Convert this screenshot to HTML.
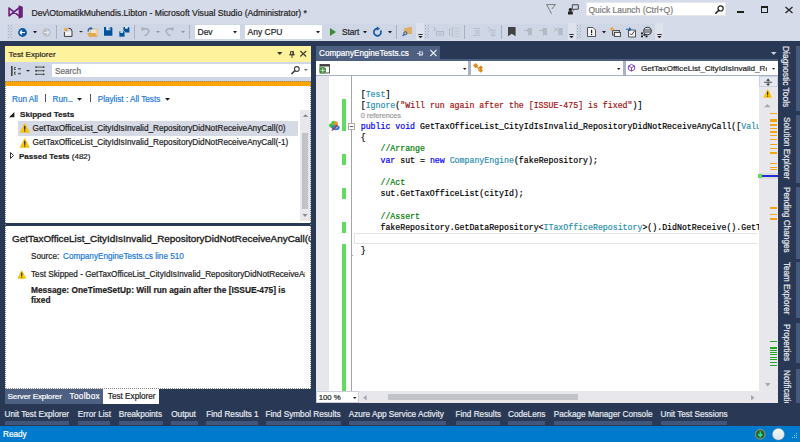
<!DOCTYPE html>
<html><head><meta charset="utf-8">
<style>
*{margin:0;padding:0;box-sizing:border-box}
html,body{width:800px;height:442px;overflow:hidden;background:#293955;font-family:"Liberation Sans",sans-serif;font-size:8.3px;color:#1e1e1e}
.a{position:absolute}
.t{position:absolute;white-space:pre;line-height:1;-webkit-text-stroke:0.2px currentColor}
svg{position:absolute;overflow:visible}
.mono{font-family:"Liberation Mono",monospace;font-size:8.24px}
</style></head><body>
<!-- ===== title bar + toolbar ===== -->
<div class="a" style="left:0;top:0;width:800px;height:41.3px;background:#D6DBE9"></div>
<svg style="left:8px;top:5px" width="15" height="14" viewBox="0 0 15 14">
  <path d="M10.6 0.3 L14.8 1.8 L14.8 12.2 L10.6 13.8 Z" fill="#68217A"/>
  <path d="M1.1 3.1 L1.1 10.8 M1.1 3.1 L11 10.9 M1.1 10.8 L11 3" stroke="#68217A" stroke-width="1.65" fill="none" stroke-linejoin="round" stroke-linecap="round"/>
</svg>
<div class="t" style="left:31.5px;top:8.5px;font-size:8.63px;color:#1e1e1e">Dev\OtomatikMuhendis.Libton - Microsoft Visual Studio (Administrator) *</div>

<!-- filter icon -->
<svg style="left:545.5px;top:4px" width="10" height="10" viewBox="0 0 10 10" fill="none" stroke="#707070" stroke-width="0.9">
  <path d="M0.5 0.6 H9.5 M0.6 0.6 L5.6 9.8 M9.4 0.6 L5.8 5"/>
</svg>
<!-- feedback icon -->
<svg style="left:567.5px;top:3.5px" width="11" height="11" viewBox="0 0 11 11">
  <path d="M4.3 0.8 H10.3 V5.2 H6.8 L5.6 6.3 V5.2 H4.3 Z" fill="none" stroke="#333" stroke-width="0.9"/>
  <circle cx="2.4" cy="5.6" r="1.7" fill="#222"/>
  <path d="M0 10.6 V8 Q0 7.2 1 7.2 H3.8 Q4.8 7.2 4.8 8 V10.6Z" fill="#222"/>
</svg>
<!-- quick launch -->
<div class="a" style="left:585.8px;top:1.9px;width:140.4px;height:14.3px;background:#fff;border:1px solid #E6E8EE"></div>
<div class="t" style="left:588.5px;top:5.5px;font-size:8.47px;color:#7A7A7A">Quick Launch (Ctrl+Q)</div>
<svg style="left:714.8px;top:4.5px" width="9" height="9" viewBox="0 0 9 9"><circle cx="5.6" cy="3.4" r="2.6" fill="none" stroke="#1e1e1e" stroke-width="1.2"/><path d="M3.8 5.2 L0.8 8.2" stroke="#1e1e1e" stroke-width="1.6" stroke-linecap="round"/></svg>
<!-- window controls -->
<div class="a" style="left:737px;top:10.6px;width:7px;height:2px;background:#1e1e1e"></div>
<div class="a" style="left:761px;top:6px;width:7px;height:7px;border:1px solid #1e1e1e;border-top-width:2px"></div>
<svg style="left:784.5px;top:7px" width="8" height="6" viewBox="0 0 8 6"><path d="M0.5 0 L7.5 6 M7.5 0 L0.5 6" stroke="#1e1e1e" stroke-width="1.2"/></svg>

<!-- toolbar bands -->
<div class="a" style="left:7px;top:23.5px;width:409px;height:16.2px;background:#CFD6E5"></div>
<div class="a" style="left:416px;top:22.5px;width:8px;height:17px;background:#DDE2EC"></div>
<div class="a" style="left:424px;top:23.5px;width:143.5px;height:16px;background:#CFD6E5"></div>
<div class="a" style="left:567.5px;top:22.5px;width:8px;height:17px;background:#DDE2EC"></div>
<div class="a" style="left:575.5px;top:23.5px;width:80px;height:16px;background:#CFD6E5"></div>
<div class="a" style="left:655px;top:22.5px;width:8px;height:17px;background:#DDE2EC"></div>
<!-- toolbar icons -->
<svg style="left:8px;top:25px" width="5" height="14" viewBox="0 0 5 14" fill="#A9B0C0"><rect x="0" y="0.0" width="1" height="1"/><rect x="3" y="0.0" width="1" height="1"/><rect x="1.5" y="1.5" width="1" height="1"/><rect x="0" y="3.0" width="1" height="1"/><rect x="3" y="3.0" width="1" height="1"/><rect x="1.5" y="4.5" width="1" height="1"/><rect x="0" y="6.0" width="1" height="1"/><rect x="3" y="6.0" width="1" height="1"/><rect x="1.5" y="7.5" width="1" height="1"/><rect x="0" y="9.0" width="1" height="1"/><rect x="3" y="9.0" width="1" height="1"/><rect x="1.5" y="10.5" width="1" height="1"/><rect x="0" y="12.0" width="1" height="1"/><rect x="3" y="12.0" width="1" height="1"/></svg>
<svg style="left:18px;top:27.6px" width="9" height="9" viewBox="0 0 9 9">
  <circle cx="4.5" cy="4.5" r="4.4" fill="#10599E"/>
  <path d="M2 4.5 H7 M2 4.5 L4 2.5 M2 4.5 L4 6.5" stroke="#fff" stroke-width="1.2" fill="none"/>
</svg>
<svg style="left:33px;top:31px" width="4" height="2.5" viewBox="0 0 4 2.5"><path d="M0 0 H4 L2 2.5Z" fill="#1e1e1e"/></svg>
<svg style="left:42px;top:27.6px" width="9" height="9" viewBox="0 0 9 9">
  <circle cx="4.5" cy="4.5" r="4.2" fill="#BDBFC4"/>
  <path d="M7 4.5 H2 M7 4.5 L5 2.5 M7 4.5 L5 6.5" stroke="#E8E9EC" stroke-width="1.2" fill="none"/>
</svg>
<div class="a" style="left:56px;top:25px;width:1.3px;height:13.5px;background:#A9B1C1"></div>
<!-- new project -->
<svg style="left:63px;top:27px" width="10" height="10" viewBox="0 0 10 10">
  <path d="M1.4 5 V9.4 H9 V4.2" fill="#F2F2F4" stroke="#333" stroke-width="0.95"/>
  <path d="M5.5 1.2 Q8.8 1 9 4.2" fill="none" stroke="#333" stroke-width="1"/>
  <path d="M3 0.2 L3.7 1.6 L5.3 1.4 L4.3 2.6 L5.3 3.8 L3.7 3.6 L3 5 L2.3 3.6 L0.7 3.8 L1.7 2.6 L0.7 1.4 L2.3 1.6Z" fill="#E0A040"/>
  <circle cx="3" cy="2.6" r="1.3" fill="#E8A444"/>
</svg>
<svg style="left:78.5px;top:31px" width="4" height="1.6" viewBox="0 0 4 1.6"><path d="M0 0 H4 L2 1.6Z" fill="#1E2A40"/></svg>
<!-- open folder -->
<svg style="left:87.3px;top:27px" width="10.5" height="10" viewBox="0 0 10.5 10">
  <path d="M3.5 2.2 H10.2 V9.6 H3.5Z" fill="#EFE6D6" stroke="#E3B868" stroke-width="0.8"/>
  <path d="M0.2 6 H8.6 L10.2 9.8 H1.6Z" fill="#E2AA50"/>
  <path d="M1.2 4.5 Q0.8 1.3 4 1.3" fill="none" stroke="#1B5EAB" stroke-width="1.4"/>
  <path d="M3.6 0 L6 1.4 L3.6 2.8Z" fill="#1B5EAB"/>
</svg>
<!-- save -->
<svg style="left:103.9px;top:27.25px" width="8.4" height="8.8" viewBox="0 0 8.4 8.8">
  <path d="M0 0 H7.4 L8.4 1 V8.8 H0Z" fill="#00539C"/>
  <rect x="2.3" y="0" width="4" height="3.2" fill="#F0F2F7"/>
  <rect x="4.6" y="0.5" width="1" height="2" fill="#00539C"/>
</svg>
<!-- save all -->
<svg style="left:118.7px;top:26.7px" width="10.5" height="10.2" viewBox="0 0 10.5 10.2">
  <path d="M4.4 0 H9.6 L10.4 0.8 V5.4 H4.4Z" fill="#00539C"/>
  <rect x="6" y="0" width="2.8" height="1.6" fill="#F0F2F7"/>
  <path d="M0 4 H5 L5.9 4.9 V10 H0Z" fill="#00539C" stroke="#CFD6E5" stroke-width="0.7"/>
  <rect x="1.4" y="4.3" width="2.6" height="1.6" fill="#F0F2F7"/>
</svg>
<div class="a" style="left:133.5px;top:25px;width:1.3px;height:13.5px;background:#A9B1C1"></div>
<!-- undo / redo (disabled) -->
<svg style="left:140.5px;top:27px" width="9" height="9.2" viewBox="0 0 9 9.2">
  <path d="M0 0.3 L4 0.9 L1 4.2Z" fill="#A9AEB9"/>
  <path d="M1.8 2.6 Q5.5 0.6 7.5 3 Q9 5.5 3.6 9" stroke="#A9AEB9" stroke-width="1.6" fill="none"/>
</svg>
<svg style="left:156px;top:31px" width="4" height="2" viewBox="0 0 4 2"><path d="M0 0 H4 L2 2Z" fill="#8E949F"/></svg>
<svg style="left:165px;top:27px" width="9" height="9.2" viewBox="0 0 9 9.2">
  <path d="M9 0.3 L5 0.9 L8 4.2Z" fill="#A9AEB9"/>
  <path d="M7.2 2.6 Q3.5 0.6 1.5 3 Q0 5.5 5.4 9" stroke="#A9AEB9" stroke-width="1.6" fill="none"/>
</svg>
<svg style="left:180.6px;top:31px" width="4" height="2" viewBox="0 0 4 2"><path d="M0 0 H4 L2 2Z" fill="#8E949F"/></svg>
<div class="a" style="left:189px;top:25px;width:1.3px;height:13.5px;background:#A9B1C1"></div>
<!-- combos -->
<div class="a" style="left:194.7px;top:25px;width:45px;height:14px;background:#fff"></div>
<div class="t" style="left:197.5px;top:27.5px;font-size:8.5px;color:#1e1e1e">Dev</div>
<svg style="left:233px;top:31px" width="4" height="2.5" viewBox="0 0 4 2.5"><path d="M0 0 H4 L2 2.5Z" fill="#1e1e1e"/></svg>
<div class="a" style="left:244.7px;top:25px;width:77px;height:14px;background:#fff"></div>
<div class="t" style="left:247.5px;top:27.5px;font-size:8.5px;color:#1e1e1e">Any CPU</div>
<svg style="left:315.6px;top:31px" width="4" height="2.5" viewBox="0 0 4 2.5"><path d="M0 0 H4 L2 2.5Z" fill="#1e1e1e"/></svg>
<!-- start -->
<svg style="left:329.7px;top:28px" width="6" height="8" viewBox="0 0 6 8"><path d="M0 0 L6 4 L0 8Z" fill="#388A34"/></svg>
<div class="t" style="left:341.9px;top:27.5px;font-size:8.3px;color:#1e1e1e">Start</div>
<svg style="left:362.8px;top:31px" width="4" height="2.5" viewBox="0 0 4 2.5"><path d="M0 0 H4 L2 2.5Z" fill="#1e1e1e"/></svg>
<!-- refresh -->
<svg style="left:373px;top:26.8px" width="9" height="9.5" viewBox="0 0 9 9.5">
  <path d="M7.6 3.5 A3.6 3.6 0 1 1 4.2 1.6" stroke="#10599E" stroke-width="1.7" fill="none"/>
  <path d="M3.8 -0.6 L7 1.6 L3.8 3.8Z" fill="#10599E"/>
</svg>
<svg style="left:387.5px;top:31px" width="4" height="2.5" viewBox="0 0 4 2.5"><path d="M0 0 H4 L2 2.5Z" fill="#1e1e1e"/></svg>
<div class="a" style="left:396px;top:25px;width:1.3px;height:13.5px;background:#A9B1C1"></div>
<!-- find in files -->
<svg style="left:402px;top:26.5px" width="10" height="10" viewBox="0 0 10 10">
  <path d="M2 1 H5 L6 0 H10 V7 H2Z" fill="#DCB067"/>
  <circle cx="3.3" cy="6.3" r="1.6" fill="none" stroke="#1B5EAB" stroke-width="1"/>
  <path d="M2.2 7.4 L0.5 9.2" stroke="#1B5EAB" stroke-width="1.2"/>
</svg>
<!-- overflow arrows -->
<svg style="left:417.5px;top:33.9px" width="5" height="4.2" viewBox="0 0 5 4.2"><rect x="0.3" y="0" width="4.4" height="0.9" fill="#1e1e1e"/><path d="M0.3 2 H4.7 L2.5 4.2Z" fill="#1e1e1e"/></svg>
<svg style="left:569.0px;top:33.9px" width="5" height="4.2" viewBox="0 0 5 4.2"><rect x="0.3" y="0" width="4.4" height="0.9" fill="#1e1e1e"/><path d="M0.3 2 H4.7 L2.5 4.2Z" fill="#1e1e1e"/></svg>
<svg style="left:656.5px;top:33.9px" width="5" height="4.2" viewBox="0 0 5 4.2"><rect x="0.3" y="0" width="4.4" height="0.9" fill="#1e1e1e"/><path d="M0.3 2 H4.7 L2.5 4.2Z" fill="#1e1e1e"/></svg>
<!-- grips -->
<svg style="left:425px;top:25px" width="5" height="14" viewBox="0 0 5 14" fill="#A9B0C0"><rect x="0" y="0.0" width="1" height="1"/><rect x="3" y="0.0" width="1" height="1"/><rect x="1.5" y="1.5" width="1" height="1"/><rect x="0" y="3.0" width="1" height="1"/><rect x="3" y="3.0" width="1" height="1"/><rect x="1.5" y="4.5" width="1" height="1"/><rect x="0" y="6.0" width="1" height="1"/><rect x="3" y="6.0" width="1" height="1"/><rect x="1.5" y="7.5" width="1" height="1"/><rect x="0" y="9.0" width="1" height="1"/><rect x="3" y="9.0" width="1" height="1"/><rect x="1.5" y="10.5" width="1" height="1"/><rect x="0" y="12.0" width="1" height="1"/><rect x="3" y="12.0" width="1" height="1"/></svg>
<svg style="left:577px;top:25px" width="5" height="14" viewBox="0 0 5 14" fill="#A9B0C0"><rect x="0" y="0.0" width="1" height="1"/><rect x="3" y="0.0" width="1" height="1"/><rect x="1.5" y="1.5" width="1" height="1"/><rect x="0" y="3.0" width="1" height="1"/><rect x="3" y="3.0" width="1" height="1"/><rect x="1.5" y="4.5" width="1" height="1"/><rect x="0" y="6.0" width="1" height="1"/><rect x="3" y="6.0" width="1" height="1"/><rect x="1.5" y="7.5" width="1" height="1"/><rect x="0" y="9.0" width="1" height="1"/><rect x="3" y="9.0" width="1" height="1"/><rect x="1.5" y="10.5" width="1" height="1"/><rect x="0" y="12.0" width="1" height="1"/><rect x="3" y="12.0" width="1" height="1"/></svg>
<!-- disabled text-edit icons -->
<svg style="left:434.4px;top:27px" width="10" height="9" viewBox="0 0 10 9" fill="none" stroke="#B5B9C2" stroke-width="0.9">
  <path d="M0.5 0 V4 L2 2.5"/><rect x="2.5" y="4.5" width="7" height="3.5"/><path d="M4 6.2 H8"/>
</svg>
<svg style="left:448.7px;top:26.5px" width="11" height="10" viewBox="0 0 11 10" fill="none" stroke="#B5B9C2" stroke-width="0.9">
  <path d="M2.2 2 H0.5 V8 H2.2"/><path d="M3.6 0 V10"/><path d="M5.2 1.5 H10.5 M5.5 4 H10.5 M5.5 6.5 H10.5 M5.5 9 H10.5" stroke="#C2C6CE"/>
</svg>
<div class="a" style="left:464px;top:25px;width:1.3px;height:13.5px;background:#A9B1C1"></div>
<svg style="left:472.5px;top:27.5px" width="8" height="8" viewBox="0 0 8 8" fill="none" stroke="#B5B9C2" stroke-width="0.9">
  <path d="M0 0.5 H7 M2 2.8 H7 M2 5 H7 M0 7.3 H7"/>
</svg>
<svg style="left:487px;top:27px" width="9" height="9" viewBox="0 0 9 9" fill="none" stroke="#B5B9C2" stroke-width="0.9">
  <path d="M0.5 1 Q2 0 3 1.5 Q3.5 3 1.5 4.5"/><path d="M3 3 H8.5 M4 5 H8.5 M3 7 H8.5 M4 8.6 H8.5"/>
</svg>
<div class="a" style="left:501px;top:25px;width:1.3px;height:13.5px;background:#A9B1C1"></div>
<svg style="left:508px;top:26.8px" width="8" height="9.5" viewBox="0 0 8 9.5"><path d="M0 0 H7.6 V9.3 L3.8 6.8 L0 9.3Z" fill="#424242"/></svg>
<svg style="left:524.4px;top:27px" width="8.5" height="9" viewBox="0 0 8.5 9" fill="#B5B9C2">
  <path d="M4 1 H8 V9 L6 7.5 L4 9Z"/><path d="M0 3 H3 V1.5 L5 3.5 L3 5.5 V4 H0Z"/>
</svg>
<svg style="left:539.4px;top:27px" width="8.5" height="9" viewBox="0 0 8.5 9" fill="#B5B9C2">
  <path d="M4 1 H8 V9 L6 7.5 L4 9Z"/><path d="M0 3 H3 V1.5 L5 3.5 L3 5.5 V4 H0Z"/>
</svg>
<svg style="left:554.4px;top:27px" width="9" height="9" viewBox="0 0 9 9" fill="#B5B9C2">
  <path d="M4.5 1 H8.5 V9 L6.5 7.5 L4.5 9Z"/><path d="M0 0.5 L4 4 M0 4.5 L4 1" stroke="#B5B9C2" stroke-width="1"/>
</svg>
<!-- error doc icon -->
<svg style="left:587px;top:26.8px" width="9" height="10" viewBox="0 0 9 10">
  <path d="M0.5 0.5 H6 L8.5 3 V9.5 H0.5Z" fill="#F6F6F6" stroke="#424242" stroke-width="0.9"/>
  <rect x="4" y="2.8" width="1.2" height="3.5" fill="#1e1e1e"/><rect x="4" y="7" width="1.2" height="1.2" fill="#1e1e1e"/>
</svg>
<svg style="left:601.5px;top:31px" width="4" height="2.5" viewBox="0 0 4 2.5"><path d="M0 0 H4 L2 2.5Z" fill="#1e1e1e"/></svg>
<svg style="left:610px;top:26.5px" width="11" height="10" viewBox="0 0 11 10">
  <rect x="2.5" y="3.5" width="7" height="4.5" fill="none" stroke="#424242" stroke-width="0.9"/>
  <rect x="4.5" y="5.5" width="6" height="4" fill="#F0F0F0" stroke="#424242" stroke-width="0.9"/>
  <circle cx="2" cy="2" r="1.8" fill="#E8A444"/>
</svg>
<svg style="left:626.2px;top:26.5px" width="10" height="10.5" viewBox="0 0 10 10.5">
  <path d="M2.5 3 H9.5 V10 H2.5Z" fill="#F6F6F6" stroke="#424242" stroke-width="0.9"/>
  <path d="M4 6.5 L5.5 8 L8.5 4" stroke="#424242" stroke-width="1" fill="none"/>
  <path d="M0 1.8 H3 V0 L5.5 2.2 L3 4.4 V2.8 H0Z" fill="#1B5EAB"/>
</svg>
<svg style="left:641.2px;top:26.5px" width="11" height="10.5" viewBox="0 0 11 10.5">
  <circle cx="6.5" cy="4" r="3.8" fill="none" stroke="#424242" stroke-width="1.1"/>
  <path d="M3 3 H10 M3.5 5 H10" stroke="#424242" stroke-width="0.9"/>
  <rect x="0" y="5.5" width="2" height="1.8" fill="#1e1e1e"/><rect x="2.5" y="7" width="2" height="1.8" fill="#1e1e1e"/><rect x="0" y="8.5" width="2" height="1.8" fill="#1e1e1e"/><rect x="4.5" y="8.5" width="2" height="1.8" fill="#1e1e1e"/>
</svg>
<!-- ===== Test Explorer panel ===== -->
<div class="a" style="left:5px;top:46px;width:306px;height:15.5px;background:#FFF29D"></div>
<div class="t" style="left:8.4px;top:50.5px;font-size:8.1px;color:#1e1e1e">Test Explorer</div>
<svg style="left:277.2px;top:52px" width="5.5" height="3" viewBox="0 0 5.5 3"><path d="M0 0 H5.5 L2.75 3Z" fill="#3D3A2A"/></svg>
<svg style="left:288.8px;top:50.8px" width="6" height="7" viewBox="0 0 6 7" fill="none" stroke="#3D3A2A" stroke-width="0.9">
  <path d="M1.5 0.5 H4.5 V3.8 H1.5 Z M0 3.8 H6 M3 3.8 V7 M3.3 0.5 V3.8"/>
</svg>
<svg style="left:300px;top:51.2px" width="6.5" height="5.5" viewBox="0 0 6.5 5.5"><path d="M0.3 0 L6.2 5.5 M6.2 0 L0.3 5.5" stroke="#3D3A2A" stroke-width="1.1"/></svg>
<!-- toolbar -->
<div class="a" style="left:5px;top:61.5px;width:306px;height:19.5px;background:#CFD6E5"></div>
<svg style="left:10.9px;top:66.2px" width="10.5" height="10" viewBox="0 0 10.5 10" fill="#424242">
  <rect x="0" y="0" width="1.6" height="10"/>
  <path d="M3 1.2 H5 V2 H3.8 V3.2 H5 V4 H3 Z"/><path d="M3 5.8 H5 V6.6 H3.8 V7.8 H5 V8.6 H3 Z"/>
  <rect x="7" y="2" width="3" height="1.6" fill="#6A6A6A"/><rect x="7" y="6.8" width="3" height="1.6" fill="#6A6A6A"/>
</svg>
<svg style="left:26.1px;top:70.4px" width="4" height="1.8" viewBox="0 0 4 1.8"><path d="M0 0 H4 L2 1.8Z" fill="#1E2A40"/></svg>
<svg style="left:35px;top:66.2px" width="10" height="9.5" viewBox="0 0 10 9.5" stroke="#424242" fill="#424242">
  <path d="M1 1.1 H9 M1 4.75 H9 M1 8.3 H9" stroke-width="0.9"/>
  <circle cx="1" cy="1.1" r="0.9" stroke="none"/><circle cx="1" cy="4.75" r="0.9" stroke="none"/><circle cx="1" cy="8.3" r="0.9" stroke="none"/>
  <path d="M8 0 L10 1.1 L8 2.2Z M8 3.65 L10 4.75 L8 5.85Z M8 7.2 L10 8.3 L8 9.4Z" stroke="none"/>
</svg>
<div class="a" style="left:52px;top:63.5px;width:258.5px;height:13.5px;background:#fff"></div>
<div class="t" style="left:55px;top:67.6px;font-size:8.2px;color:#6D6D6D">Search</div>
<svg style="left:291.2px;top:66.2px" width="9" height="8" viewBox="0 0 9 8"><circle cx="5.8" cy="3" r="2.4" fill="none" stroke="#424242" stroke-width="1.1"/><path d="M4 4.6 L0.8 7.6" stroke="#424242" stroke-width="1.5" stroke-linecap="round"/></svg>
<svg style="left:304.3px;top:69.3px" width="3.8" height="2" viewBox="0 0 3.8 2"><path d="M0 0 H3.8 L1.9 2Z" fill="#717171"/></svg>
<!-- progress bar -->
<div class="a" style="left:5px;top:80.7px;width:306px;height:5px;background:#FFA500"></div>
<!-- list area -->
<div class="a" style="left:5px;top:85.5px;width:306px;height:137.5px;background:#fff"></div>
<div class="t" style="left:12px;top:95.7px;font-size:8.2px;color:#1E7AD8">Run All</div>
<div class="a" style="left:44.6px;top:94px;width:1.2px;height:8px;background:#555"></div>
<div class="t" style="left:52.6px;top:95.7px;font-size:8.2px;color:#1E7AD8">Run<span style="letter-spacing:-0.7px">...</span></div>
<svg style="left:76.8px;top:97.6px" width="5" height="2.8" viewBox="0 0 5 2.8"><path d="M0 0 H5 L2.5 2.8Z" fill="#1e1e1e"/></svg>
<div class="a" style="left:90.2px;top:94px;width:1.2px;height:8px;background:#555"></div>
<div class="t" style="left:97.7px;top:95.7px;font-size:8.2px;color:#1E7AD8">Playlist : All Tests</div>
<svg style="left:164.6px;top:97.6px" width="5" height="2.8" viewBox="0 0 5 2.8"><path d="M0 0 H5 L2.5 2.8Z" fill="#1e1e1e"/></svg>

<svg style="left:8.8px;top:111.8px" width="5.4" height="5.2" viewBox="0 0 5.4 5.2"><path d="M5.4 0 V5.2 H0Z" fill="#1e1e1e"/></svg>
<div class="t" style="left:20px;top:111.4px;font-size:8.1px;font-weight:bold;color:#1e1e1e">Skipped Tests</div>
<div class="a" style="left:17.6px;top:121.4px;width:280.6px;height:14.2px;background:#D6DAE5"></div>
<svg style="left:19.7px;top:123.3px" width="9.5" height="10" viewBox="0 0 9.5 10">
  <path d="M4.75 0.9 L8.9 9.1 H0.6Z" fill="#FFCC00" stroke="#F5BE00" stroke-width="1.1" stroke-linejoin="round"/>
  <rect x="4.15" y="2.9" width="1.2" height="3.9" fill="#1e1e1e"/><rect x="4.15" y="7.4" width="1.2" height="1.2" fill="#1e1e1e"/>
</svg>
<div class="t" style="left:32.6px;top:125.2px;font-size:8.22px;color:#1e1e1e">GetTaxOfficeList_CityIdIsInvalid_RepositoryDidNotReceiveAnyCall(0)</div>
<svg style="left:19.7px;top:137.5px" width="9.5" height="10" viewBox="0 0 9.5 10">
  <path d="M4.75 0.9 L8.9 9.1 H0.6Z" fill="#FFCC00" stroke="#F5BE00" stroke-width="1.1" stroke-linejoin="round"/>
  <rect x="4.15" y="2.9" width="1.2" height="3.9" fill="#1e1e1e"/><rect x="4.15" y="7.4" width="1.2" height="1.2" fill="#1e1e1e"/>
</svg>
<div class="t" style="left:32.6px;top:139.4px;font-size:8.22px;color:#1e1e1e">GetTaxOfficeList_CityIdIsInvalid_RepositoryDidNotReceiveAnyCall(-1)</div>
<svg style="left:10px;top:151.8px" width="4" height="7" viewBox="0 0 4 7"><path d="M0.5 0.5 L3.5 3.5 L0.5 6.5Z" fill="none" stroke="#1e1e1e" stroke-width="0.9"/></svg>
<div class="t" style="left:19px;top:152.5px;font-size:8.0px;color:#1e1e1e"><b>Passed Tests</b> (482)</div>
<!-- scrollbar -->
<div class="a" style="left:299.5px;top:109.5px;width:11px;height:111px;background:#E8E8EC"></div>
<div class="a" style="left:302px;top:133px;width:6px;height:76px;background:#C2C3C9"></div>
<svg style="left:302.5px;top:113.5px" width="5" height="3" viewBox="0 0 5 3"><path d="M0 3 H5 L2.5 0Z" fill="#868999"/></svg>
<svg style="left:302px;top:214px" width="6" height="3" viewBox="0 0 5 3"><path d="M0 0 H5 L2.5 3Z" fill="#868999"/></svg>

<!-- details pane -->
<div class="a" style="left:5px;top:226px;width:306px;height:163px;background:#fff"></div>
<div class="a" style="left:5px;top:226px;width:306px;height:20px;overflow:hidden">
  <div class="t" style="left:7px;top:7.6px;font-size:9.91px;color:#1e1e1e;-webkit-text-stroke:0.35px #1e1e1e">GetTaxOfficeList_CityIdIsInvalid_RepositoryDidNotReceiveAnyCall(0)</div>
</div>
<div class="t" style="left:31px;top:253.4px;font-size:8.2px;color:#1e1e1e">Source:</div>
<div class="t" style="left:63px;top:253.4px;font-size:8.18px;color:#1E7AD8">CompanyEngineTests.cs line 510</div>
<svg style="left:17px;top:269.5px" width="9.5" height="9" viewBox="0 0 9.5 10">
  <path d="M4.75 0.9 L8.9 9.1 H0.6Z" fill="#FFCC00" stroke="#F5BE00" stroke-width="1.1" stroke-linejoin="round"/>
  <rect x="4.15" y="2.9" width="1.2" height="3.9" fill="#1e1e1e"/><rect x="4.15" y="7.4" width="1.2" height="1.2" fill="#1e1e1e"/>
</svg>
<div class="a" style="left:31px;top:266px;width:274px;height:14px;overflow:hidden">
  <div class="t" style="left:0;top:5.3px;font-size:8.2px;color:#1e1e1e">Test Skipped - GetTaxOfficeList_CityIdIsInvalid_RepositoryDidNotReceiveAnyCall(0)</div>
</div>
<div class="t" style="left:31px;top:285.8px;font-size:8.37px;font-weight:bold;color:#1e1e1e">Message: OneTimeSetUp: Will run again after the [ISSUE-475] is</div>
<div class="t" style="left:31px;top:295.8px;font-size:8.37px;font-weight:bold;color:#1e1e1e">fixed</div>

<!-- focus rect -->
<div class="a" style="left:5px;top:80.9px;width:306px;height:308.1px;border:1px dotted #8A8A8A"></div>
<!-- tool window tabs -->
<div class="a" style="left:5px;top:389px;width:98px;height:15px;background:#4D6082"></div>
<div class="t" style="left:7.6px;top:392.6px;font-size:8.05px;letter-spacing:-0.12px;color:#fff">Server Explorer</div>
<div class="t" style="left:69.5px;top:392.6px;font-size:8.2px;letter-spacing:0.33px;color:#fff">Toolbox</div>
<div class="a" style="left:103px;top:389px;width:56px;height:15px;background:#fff"></div>
<div class="t" style="left:107.8px;top:392.6px;font-size:8.2px;color:#1e1e1e">Test Explorer</div>
<!-- ===== Editor ===== -->
<div class="a" style="left:316px;top:46px;width:124.3px;height:13px;background:#4D6082"></div>
<div class="a" style="left:316px;top:59px;width:462px;height:1.6px;background:#4D6082"></div>
<div class="t" style="left:319px;top:49.8px;font-size:8.18px;color:#fff">CompanyEngineTests.cs</div>
<svg style="left:417px;top:51px" width="6" height="5" viewBox="0 0 6 5">
  <rect x="0" y="2.1" width="2.2" height="0.8" fill="#E6E9F0"/>
  <rect x="2.2" y="0" width="0.8" height="5" fill="#E6E9F0"/>
  <path d="M3 0.9 H5.6 V4.1 H3" fill="none" stroke="#E6E9F0" stroke-width="0.8"/>
  <rect x="3" y="2.8" width="2.6" height="0.8" fill="#E6E9F0"/>
</svg>
<svg style="left:429.8px;top:50.2px" width="6.8" height="6" viewBox="0 0 6.8 6"><path d="M0.3 0 L6.5 6 M6.5 0 L0.3 6" stroke="#E6E9F0" stroke-width="1.1"/></svg>
<svg style="left:770.5px;top:51.5px" width="5.5" height="3" viewBox="0 0 5.5 3"><path d="M0 0 H5.5 L2.75 3Z" fill="#CED4DD"/></svg>

<!-- nav bar -->
<div class="a" style="left:316px;top:60.6px;width:461.5px;height:15.6px;background:#fff;border-bottom:1.4px solid #A9B3C6"></div>
<div class="a" style="left:468.1px;top:60.6px;width:2.6px;height:14.3px;background:#A9B3C6"></div>
<div class="a" style="left:623.1px;top:60.6px;width:2.6px;height:14.3px;background:#A9B3C6"></div>
<svg style="left:318.6px;top:63.6px" width="11" height="10" viewBox="0 0 11 10">
  <rect x="1" y="0.5" width="9.5" height="8.5" fill="none" stroke="#424242" stroke-width="0.9"/>
  <rect x="1" y="0.5" width="9.5" height="2" fill="#424242"/>
  <circle cx="3.8" cy="6.3" r="3.3" fill="#388A34"/>
  <path d="M3.8 3.8 V8.8 M1.3 6.3 H6.3" stroke="#fff" stroke-width="0.7"/>
</svg>
<svg style="left:462.5px;top:68px" width="3.5" height="2" viewBox="0 0 3.5 2"><path d="M0 0 H3.5 L1.75 2Z" fill="#1e1e1e"/></svg>
<svg style="left:473.4px;top:63px" width="10.5" height="9.8" viewBox="0 0 10.5 9.8">
  <path d="M0 2.6 L2.6 0 L5.2 2.6 L2.6 5.2Z" fill="#D9891C"/>
  <path d="M3 3 L6 5.8 V8.2" stroke="#D9891C" stroke-width="1.2" fill="none"/>
  <path d="M5.6 4.6 L7.8 2.4 L10 4.6 L7.8 6.8Z" fill="#D9891C"/>
  <path d="M5.6 7.6 L7.8 5.4 L10 7.6 L7.8 9.8Z" fill="#D9891C"/>
</svg>
<svg style="left:617.4px;top:68px" width="3.5" height="2" viewBox="0 0 3.5 2"><path d="M0 0 H3.5 L1.75 2Z" fill="#1e1e1e"/></svg>
<svg style="left:628px;top:64px" width="7" height="7.5" viewBox="0 0 7 7.5" fill="none" stroke="#7B3EBF" stroke-width="0.95">
  <path d="M3.5 0.4 L6.6 2 V5.5 L3.5 7.1 L0.4 5.5 V2 Z M0.4 2 L3.5 3.7 L6.6 2 M3.5 3.7 V7.1"/>
</svg>
<div class="a" style="left:641px;top:60.6px;width:126px;height:14px;overflow:hidden">
  <div class="t" style="left:0;top:4.6px;font-size:8.1px;color:#1e1e1e">GetTaxOfficeList_CityIdIsInvalid_RepositoryDidNotReceiveAnyCall</div>
</div>
<svg style="left:771.9px;top:67.8px" width="3.2" height="1.8" viewBox="0 0 3.2 1.8"><path d="M0 0 H3.2 L1.6 1.8Z" fill="#1e1e1e"/></svg>

<!-- editor body -->
<div class="a" style="left:316px;top:76px;width:442.5px;height:315px;background:#fff"></div>
<div class="a" style="left:316px;top:76px;width:12.6px;height:315px;background:#E6E7EB"></div>
<div class="a" style="left:351.2px;top:76px;width:0.9px;height:315px;background:#A5A5A5"></div>
<!-- change bars -->
<div class="a" style="left:342.3px;top:99.2px;width:3.7px;height:32px;background:#63DB63"></div>
<div class="a" style="left:342.3px;top:153.6px;width:3.7px;height:11.3px;background:#63DB63"></div>
<div class="a" style="left:342.3px;top:187.8px;width:3.7px;height:11.3px;background:#63DB63"></div>
<div class="a" style="left:342.3px;top:221.6px;width:3.7px;height:11.3px;background:#63DB63"></div>
<div class="a" style="left:342.3px;top:244.2px;width:3.7px;height:146.8px;background:#63DB63"></div>
<!-- collapse box -->
<svg style="left:347.6px;top:123px" width="7" height="7" viewBox="0 0 7 7"><rect x="0.5" y="0.5" width="6" height="6" fill="#fff" stroke="#A5A5A5" stroke-width="0.9"/><path d="M1.8 3.5 H5.2" stroke="#555" stroke-width="0.9"/></svg>
<div class="a" style="left:351.2px;top:255px;width:2.2px;height:0.9px;background:#A5A5A5"></div>
<!-- test status icon -->
<svg style="left:329px;top:120px" width="11" height="11" viewBox="0 0 11 11">
  <circle cx="2.4" cy="5.6" r="2.3" fill="#3CC43C"/>
  <circle cx="4.6" cy="3" r="2.3" fill="#49C93F"/>
  <circle cx="6.8" cy="3.4" r="2.2" fill="#E9962E"/>
  <ellipse cx="6.6" cy="7.6" rx="4" ry="2.7" fill="#2F7BCF"/>
  <path d="M4.6 8.4 L6.2 6.4 M7 8.6 L8.6 6.6" stroke="#fff" stroke-width="0.8"/>
  <path d="M2.8 10.6 L8.4 5" stroke="#C0262A" stroke-width="1.1"/>
</svg>
<!-- current line box -->
<div class="a" style="left:354.4px;top:233.3px;width:404px;height:10.4px;border:1px solid #E4E4E4;border-right:none"></div>
<!-- code -->
<div class="a" style="left:352px;top:76px;width:406.5px;height:315px;overflow:hidden">
<div class="mono t" style="left:8.7px;top:14.9px;color:#000">[<span style="color:#2B91AF">Test</span>]</div>
<div class="mono t" style="left:8.7px;top:26.1px;color:#000">[<span style="color:#2B91AF">Ignore</span>(<span style="color:#A31515">"Will run again after the [ISSUE-475] is fixed"</span>)]</div>
<div class="t" style="left:8.7px;top:36.2px;font-size:7.25px;color:#9A9A9A">0 references</div>
<div class="mono t" style="left:8.7px;top:46.6px;color:#000"><span style="color:#0000FF">public</span> <span style="color:#0000FF">void</span> GetTaxOfficeList_CityIdIsInvalid_RepositoryDidNotReceiveAnyCall([<span style="color:#2B91AF">Values</span>(0, -1)] <span style="color:#0000FF">int</span> cityId)</div>
<div class="mono t" style="left:8.7px;top:57.9px;color:#000">{</div>
<div class="mono t" style="left:8.7px;top:69.2px;color:#008000">    //Arrange</div>
<div class="mono t" style="left:8.7px;top:80.5px;color:#000">    <span style="color:#0000FF">var</span> sut = <span style="color:#0000FF">new</span> <span style="color:#2B91AF">CompanyEngine</span>(fakeRepository);</div>
<div class="mono t" style="left:8.7px;top:103.1px;color:#008000">    //Act</div>
<div class="mono t" style="left:8.7px;top:114.3px;color:#000">    sut.GetTaxOfficeList(cityId);</div>
<div class="mono t" style="left:8.7px;top:136.9px;color:#008000">    //Assert</div>
<div class="mono t" style="left:8.7px;top:148.2px;color:#000">    fakeRepository.GetDataRepository&lt;<span style="color:#2B91AF">ITaxOfficeRepository</span>&gt;().DidNotReceive().GetTaxOffices(cityId);</div>
<div class="mono t" style="left:8.7px;top:170.7px;color:#000">}</div>
</div>

<!-- vertical scrollbar -->
<div class="a" style="left:758.5px;top:76px;width:19px;height:315px;background:#E8E8EC"></div>
<div class="a" style="left:758.5px;top:76.2px;width:19px;height:11px;background:#E4E9F3;border:0.8px solid #C9D0DE"></div>
<svg style="left:763.7px;top:77.5px" width="8.2" height="8.5" viewBox="0 0 8.2 8.5" fill="#424242">
  <rect x="0" y="3.8" width="8.2" height="0.9"/><path d="M2 2.8 L4.1 0.5 L6.2 2.8Z"/><path d="M2 5.7 L4.1 8 L6.2 5.7Z"/><rect x="3.7" y="1.8" width="0.9" height="2"/><rect x="3.7" y="4.7" width="0.9" height="2"/>
</svg>
<svg style="left:763.3px;top:89px" width="9.3" height="9" viewBox="0 0 9.5 10">
  <path d="M4.75 0.9 L8.9 9.1 H0.6Z" fill="#FFCC00" stroke="#F5BE00" stroke-width="1.1" stroke-linejoin="round"/>
  <rect x="4.15" y="2.9" width="1.2" height="3.9" fill="#1e1e1e"/><rect x="4.15" y="7.4" width="1.2" height="1.2" fill="#1e1e1e"/>
</svg>
<svg style="left:764.4px;top:103.5px" width="6.8" height="3.3" viewBox="0 0 6.8 3.3"><path d="M0 3.3 H6.8 L3.4 0Z" fill="#A8A8B0"/></svg>
<svg style="left:765px;top:382.8px" width="5.5" height="3.7" viewBox="0 0 5.5 3.7"><path d="M0 0 H5.5 L2.75 3.7Z" fill="#A8A8B0"/></svg>
<!-- orange marks -->
<div class="a" style="left:758.5px;top:173.3px;width:19px;height:5.6px;background:#DADAE0"></div>
<div class="a" style="left:770px;top:112.9px;width:7.3px;height:1.4px;background:#F5A30F"></div>
<div class="a" style="left:770px;top:119.2px;width:7.3px;height:1.4px;background:#F5A30F"></div>
<div class="a" style="left:770px;top:121.1px;width:7.3px;height:1.4px;background:#F5A30F"></div>
<div class="a" style="left:770px;top:124.2px;width:7.3px;height:1.4px;background:#F5A30F"></div>
<div class="a" style="left:770px;top:127.7px;width:7.3px;height:1.4px;background:#F5A30F"></div>
<div class="a" style="left:770px;top:131.3px;width:7.3px;height:1.4px;background:#F5A30F"></div>
<div class="a" style="left:770px;top:134.9px;width:7.3px;height:1.4px;background:#F5A30F"></div>
<div class="a" style="left:770px;top:138.5px;width:7.3px;height:1.4px;background:#F5A30F"></div>
<div class="a" style="left:770px;top:143.7px;width:7.3px;height:1.4px;background:#F5A30F"></div>
<div class="a" style="left:770px;top:147.6px;width:7.3px;height:1.4px;background:#F5A30F"></div>
<div class="a" style="left:770px;top:152.4px;width:7.3px;height:1.4px;background:#F5A30F"></div>
<div class="a" style="left:770px;top:163.0px;width:7.3px;height:1.4px;background:#F5A30F"></div>
<div class="a" style="left:770px;top:166.5px;width:7.3px;height:1.4px;background:#F5A30F"></div>
<div class="a" style="left:770px;top:168.7px;width:7.3px;height:1.4px;background:#F5A30F"></div>
<div class="a" style="left:770px;top:207.4px;width:7.3px;height:1.4px;background:#F5A30F"></div>
<div class="a" style="left:770px;top:213.8px;width:7.3px;height:1.4px;background:#F5A30F"></div>
<div class="a" style="left:770px;top:218.3px;width:7.3px;height:1.4px;background:#F5A30F"></div>
<!-- caret marker -->
<div class="a" style="left:758.5px;top:175.4px;width:19px;height:1.7px;background:#1F2FD0"></div>
<div class="a" style="left:758.3px;top:173.8px;width:3.6px;height:4.6px;background:#63DB63"></div>
<!-- green marks -->
<div class="a" style="left:770px;top:341.1px;width:7.3px;height:1.4px;background:#20A820"></div>
<div class="a" style="left:770px;top:347.4px;width:7.3px;height:1.4px;background:#20A820"></div>
<div class="a" style="left:770px;top:349.7px;width:7.3px;height:1.4px;background:#20A820"></div>
<div class="a" style="left:770px;top:351.7px;width:7.3px;height:1.4px;background:#20A820"></div>
<div class="a" style="left:770px;top:353.8px;width:7.3px;height:1.4px;background:#20A820"></div>
<div class="a" style="left:770px;top:356.5px;width:7.3px;height:1.4px;background:#20A820"></div>
<div class="a" style="left:770px;top:358.8px;width:7.3px;height:1.4px;background:#20A820"></div>
<div class="a" style="left:770px;top:361.9px;width:7.3px;height:1.4px;background:#20A820"></div>
<div class="a" style="left:770px;top:365.1px;width:7.3px;height:1.4px;background:#20A820"></div>

<!-- bottom: zoom + h-scrollbar -->
<div class="a" style="left:316px;top:391px;width:462px;height:12.3px;background:#E8E8EC"></div>
<div class="a" style="left:316px;top:391px;width:42.5px;height:12.3px;background:#fff;border:0.8px solid #CCCEDB"></div>
<div class="t" style="left:318.7px;top:393.8px;font-size:7.8px;color:#1e1e1e">100 %</div>
<svg style="left:353px;top:396.5px" width="3.5" height="2" viewBox="0 0 3.5 2"><path d="M0 0 H3.5 L1.75 2Z" fill="#1e1e1e"/></svg>
<svg style="left:363px;top:394.5px" width="3.7" height="5.5" viewBox="0 0 3.7 5.5"><path d="M3.7 0 V5.5 L0 2.75Z" fill="#A8A8B0"/></svg>
<div class="a" style="left:387.5px;top:394px;width:190px;height:6px;background:#C2C3C9"></div>
<svg style="left:750.6px;top:394.5px" width="3.7" height="5.5" viewBox="0 0 3.7 5.5"><path d="M0 0 V5.5 L3.7 2.75Z" fill="#A8A8B0"/></svg>
<!-- ===== bottom auto-hide tabs ===== -->
<div class="a" style="left:4.5px;top:421.3px;width:64.50px;height:4.2px;background:#42557A"></div>
<div class="t" style="left:4.5px;top:410.6px;font-size:8.2px;color:#E6E9F0">Unit Test Explorer</div>
<div class="a" style="left:77.75px;top:421.3px;width:32.25px;height:4.2px;background:#42557A"></div>
<div class="t" style="left:77.75px;top:410.6px;font-size:8.2px;color:#E6E9F0">Error List</div>
<div class="a" style="left:118.75px;top:421.3px;width:43.75px;height:4.2px;background:#42557A"></div>
<div class="t" style="left:118.75px;top:410.6px;font-size:8.2px;color:#E6E9F0">Breakpoints</div>
<div class="a" style="left:171.25px;top:421.3px;width:26.75px;height:4.2px;background:#42557A"></div>
<div class="t" style="left:171.25px;top:410.6px;font-size:8.2px;color:#E6E9F0">Output</div>
<div class="a" style="left:206.25px;top:421.3px;width:51.25px;height:4.2px;background:#42557A"></div>
<div class="t" style="left:206.25px;top:410.6px;font-size:8.2px;color:#E6E9F0">Find Results 1</div>
<div class="a" style="left:265.5px;top:421.3px;width:75.00px;height:4.2px;background:#42557A"></div>
<div class="t" style="left:265.5px;top:410.6px;font-size:8.2px;color:#E6E9F0">Find Symbol Results</div>
<div class="a" style="left:348.75px;top:421.3px;width:97.50px;height:4.2px;background:#42557A"></div>
<div class="t" style="left:348.75px;top:410.6px;font-size:8.2px;color:#E6E9F0">Azure App Service Activity</div>
<div class="a" style="left:455.5px;top:421.3px;width:44.00px;height:4.2px;background:#42557A"></div>
<div class="t" style="left:455.5px;top:410.6px;font-size:8.2px;color:#E6E9F0">Find Results</div>
<div class="a" style="left:508px;top:421.3px;width:36.50px;height:4.2px;background:#42557A"></div>
<div class="t" style="left:508px;top:410.6px;font-size:8.2px;color:#E6E9F0">CodeLens</div>
<div class="a" style="left:553.75px;top:421.3px;width:98.25px;height:4.2px;background:#42557A"></div>
<div class="t" style="left:553.75px;top:410.6px;font-size:8.2px;color:#E6E9F0">Package Manager Console</div>
<div class="a" style="left:660.5px;top:421.3px;width:66.50px;height:4.2px;background:#42557A"></div>
<div class="t" style="left:660.5px;top:410.6px;font-size:8.2px;color:#E6E9F0">Unit Test Sessions</div>
<!-- ===== right vertical tabs ===== -->
<div class="a" style="left:795.6px;top:46px;width:4.4px;height:64.50px;background:#465A7D"></div>
<div class="t" style="left:790.2px;top:46.3px;font-size:8.45px;color:#E6E9F0;transform-origin:0 0;transform:rotate(90deg)">Diagnostic Tools</div>
<div class="a" style="left:795.6px;top:115px;width:4.4px;height:67.70px;background:#465A7D"></div>
<div class="t" style="left:790.2px;top:116.6px;font-size:8.2px;color:#E6E9F0;transform-origin:0 0;transform:rotate(90deg)">Solution Explorer</div>
<div class="a" style="left:795.6px;top:186.5px;width:4.4px;height:72.10px;background:#465A7D"></div>
<div class="t" style="left:790.2px;top:187.2px;font-size:8.28px;color:#E6E9F0;transform-origin:0 0;transform:rotate(90deg)">Pending Changes</div>
<div class="a" style="left:795.6px;top:261.5px;width:4.4px;height:56.80px;background:#465A7D"></div>
<div class="t" style="left:790.2px;top:262.2px;font-size:8.15px;color:#E6E9F0;transform-origin:0 0;transform:rotate(90deg)">Team Explorer</div>
<div class="a" style="left:795.6px;top:322.5px;width:4.4px;height:40.90px;background:#465A7D"></div>
<div class="t" style="left:790.2px;top:323.6px;font-size:8.15px;color:#E6E9F0;transform-origin:0 0;transform:rotate(90deg)">Properties</div>
<div class="a" style="left:795.6px;top:369px;width:4.4px;height:34.30px;background:#465A7D"></div>
<div class="t" style="left:790.2px;top:369.8px;font-size:8.2px;color:#E6E9F0;transform-origin:0 0;transform:rotate(90deg)">Notifications</div>
<div class="a" style="left:777.5px;top:403.3px;width:22.5px;height:23px;background:#293955"></div>
<!-- status bar -->
<div class="a" style="left:0;top:425.5px;width:800px;height:16.5px;background:#007ACC"></div>
<div class="t" style="left:3px;top:431.2px;font-size:8.2px;color:#fff">Ready</div>
<svg style="left:754.6px;top:429px" width="10.5" height="10.5" viewBox="0 0 10.5 10.5">
  <circle cx="5.25" cy="5.25" r="4.8" fill="#2C5E2A" stroke="#A8A27A" stroke-width="0.9"/>
  <path d="M5.25 2.2 V6.5 M3.2 4.8 L5.25 7.6 L7.3 4.8" stroke="#22E6A8" stroke-width="1.3" fill="none"/>
</svg>
<svg style="left:772.2px;top:427.9px" width="13" height="12.5" viewBox="0 0 13 12.5">
  <defs><linearGradient id="wg" x1="0" y1="0" x2="0" y2="1"><stop offset="0" stop-color="#F4F7F8"/><stop offset="1" stop-color="#D6E6EA"/></linearGradient></defs>
  <ellipse cx="6.4" cy="6.25" rx="6.1" ry="6" fill="url(#wg)" stroke="#5F7A88" stroke-width="0.5"/>
</svg>
<svg style="left:791px;top:433px" width="6" height="6" viewBox="0 0 6 6" fill="#9CC8EA">
  <rect x="5" y="0" width="1" height="1"/><rect x="3" y="2" width="1" height="1"/><rect x="5" y="2" width="1" height="1"/><rect x="1" y="4" width="1" height="1"/><rect x="3" y="4" width="1" height="1"/><rect x="5" y="4" width="1" height="1"/>
</svg>
</body></html>
